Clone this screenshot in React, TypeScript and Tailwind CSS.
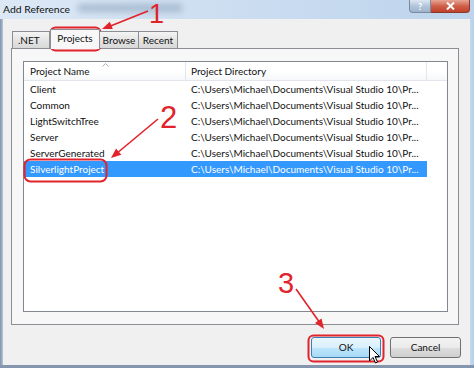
export default function App() {
  const rows = ["Client", "Common", "LightSwitchTree", "Server", "ServerGenerated", "SilverlightProject"];
  const dir = "C:\\Users\\Michael\\Documents\\Visual Studio 10\\Pr...";
  const font = { fontFamily: 'Lato, "Noto Sans", sans-serif' };
  return (
    <div
      className="relative w-[474px] h-[368px] overflow-hidden flex flex-col bg-[linear-gradient(90deg,#dce8f5,#cadcf0_55%,#bdd4ec)]"
      style={font}
    >
      {/* title bar */}
      <div className="h-[19px] flex items-start shrink-0">
        <span className="ml-[3px] mt-[1px] text-[10.4px] leading-[16px] text-[#111]">Add Reference</span>
        <div className="ml-[8px] mt-[4px] w-[104px] h-[8px] bg-[#8da2bb] blur-[3px] opacity-60" />
        <div className="ml-auto mr-[4px] flex h-[13px]">
          <div className="w-[22px] h-[13px] rounded-bl-[4px] border border-t-0 border-[#7a8ba0] bg-[linear-gradient(180deg,#dbe6f2,#b3c5db_50%,#9fb4cd)] flex items-center justify-center text-[9px] leading-none text-white font-bold">
            ?
          </div>
          <div className="w-[39px] h-[13px] rounded-br-[4px] border border-t-0 border-l-0 border-[#8a3a2c] bg-[linear-gradient(180deg,#e8a596,#d0604a_50%,#c0402a)] flex items-center justify-center">
            <svg width="9" height="8" viewBox="0 0 9 8">
              <path d="M1 0.5 L8 7.5 M8 0.5 L1 7.5" stroke="#ffffff" strokeWidth="2" />
            </svg>
          </div>
        </div>
      </div>

      {/* body */}
      <div className="flex-1 flex min-h-0">
        <div className="w-[3px] bg-[linear-gradient(90deg,#8092a8,#b4c6da)]" />
        <div className="flex-1 bg-[#f0f0f0] flex flex-col pl-[8px] pr-[11px] pt-[12px] min-w-0">
          {/* tabs */}
          <div className="h-[17px] flex items-end text-[10px] text-[#111] relative z-10">
            <div className="ml-[1px] w-[38px] h-[17px] border border-b-0 border-[#8c8e94] bg-[linear-gradient(180deg,#f4f4f4,#e4e4e4_50%,#d8d8d8)] flex items-center pl-[5px]">
              .NET
            </div>
            <div className="w-[50px] h-[20px] -mb-px border border-b-0 border-[#8c8e94] bg-[#f7f7f7] flex items-center justify-center pb-[2px]">
              Projects
            </div>
            <div className="w-[39px] h-[17px] border border-b-0 border-l-0 border-[#8c8e94] bg-[linear-gradient(180deg,#f4f4f4,#e4e4e4_50%,#d8d8d8)] flex items-center justify-center">
              Browse
            </div>
            <div className="w-[39px] h-[17px] border border-b-0 border-l-0 border-[#8c8e94] bg-[linear-gradient(180deg,#f4f4f4,#e4e4e4_50%,#d8d8d8)] flex items-center justify-center">
              Recent
            </div>
          </div>

          {/* tab page */}
          <div className="h-[277px] border border-[#8c8e94] bg-[#f7f7f7] flex flex-col pl-[11px] pr-[10px] pt-[12px] pb-[12px]">
            <div className="flex-1 border border-[#828790] bg-white flex flex-col text-[10px] text-[#111]">
              {/* header */}
              <div className="h-[19px] flex border-b border-[#e2e6ec] bg-[linear-gradient(180deg,#ffffff,#ffffff_50%,#f6f7f9)] shrink-0">
                <div className="relative w-[162px] border-r border-[#e3e6ea] flex items-center pl-[6px]">
                  Project Name
                  <svg className="absolute left-[78px] top-[1px]" width="7" height="4" viewBox="0 0 7 4">
                    <path d="M0.5 3.5 L3.5 0.5 L6.5 3.5" stroke="#a7b1bd" strokeWidth="1" fill="none" />
                  </svg>
                </div>
                <div className="w-[241px] border-r border-[#e3e6ea] flex items-center pl-[5px]">Project Directory</div>
                <div className="flex-1" />
              </div>
              {/* rows */}
              {rows.map((r, i) => {
                const sel = i === rows.length - 1;
                return (
                  <div
                    key={r}
                    className={
                      sel
                        ? "h-[16px] w-[403px] flex items-center bg-[#3399ff] text-white"
                        : "h-[16px] w-[403px] flex items-center"
                    }
                  >
                    <div className="w-[162px] pl-[6px] whitespace-nowrap">{r}</div>
                    <div className="w-[241px] pl-[5px] whitespace-nowrap">{dir}</div>
                  </div>
                );
              })}
            </div>
          </div>

          {/* buttons */}
          <div className="mt-[12px] -mr-[2px] flex justify-end gap-[9px] text-[10px] text-[#111]">
            <div className="w-[70px] h-[21px] rounded-[3px] border border-[#3c7fb1] bg-[linear-gradient(180deg,#eaf6fd,#d9f0fc_50%,#bee6fd_51%,#a7d9f5)] flex items-center justify-center">
              OK
            </div>
            <div className="w-[71px] h-[21px] rounded-[3px] border border-[#707070] bg-[linear-gradient(180deg,#f2f2f2,#ebebeb_50%,#dddddd_51%,#cfcfcf)] flex items-center justify-center">
              Cancel
            </div>
          </div>
        </div>
        <div className="w-[4px] bg-[linear-gradient(90deg,#c6d9ee,#b8cfe8)]" />
      </div>
      <div className="h-[3px] shrink-0 bg-[#8396ad]" />

      {/* annotations overlay */}
      <svg className="absolute inset-0 pointer-events-none" width="474" height="368" viewBox="0 0 474 368">
        <g stroke="#e1232b" fill="none" strokeWidth="2">
          <rect x="50.5" y="27.5" width="50" height="23" rx="5" />
          <rect x="24.5" y="159.5" width="82" height="22" rx="6" />
          <rect x="308.5" y="335.5" width="75" height="26" rx="5" />
          <line x1="148" y1="11" x2="108" y2="27" strokeWidth="1.6" />
          <line x1="158" y1="119" x2="116" y2="154" strokeWidth="1.6" />
          <line x1="296" y1="289" x2="320" y2="323" strokeWidth="1.6" />
        </g>
        <g fill="#e1232b">
          <polygon points="102,29 112.8,29.1 109.8,21.7" />
          <polygon points="111,158 121.3,154.7 116.1,148.5" />
          <polygon points="324,329 315,323.1 321.5,318.5" />
          <text x="149" y="23" fontSize="27" fontFamily="'Liberation Sans', Arial, sans-serif">1</text>
          <text x="160" y="128" fontSize="31" fontFamily="'Liberation Sans', Arial, sans-serif">2</text>
          <text x="278" y="293" fontSize="29" fontFamily="'Liberation Sans', Arial, sans-serif">3</text>
        </g>
        <path
          d="M369.5 346.5 L369.5 361 L373 357.5 L375.5 363 L377.5 362 L375 356.5 L379.5 356.5 Z"
          fill="#ffffff"
          stroke="#000000"
          strokeWidth="1"
        />
      </svg>
    </div>
  );
}
